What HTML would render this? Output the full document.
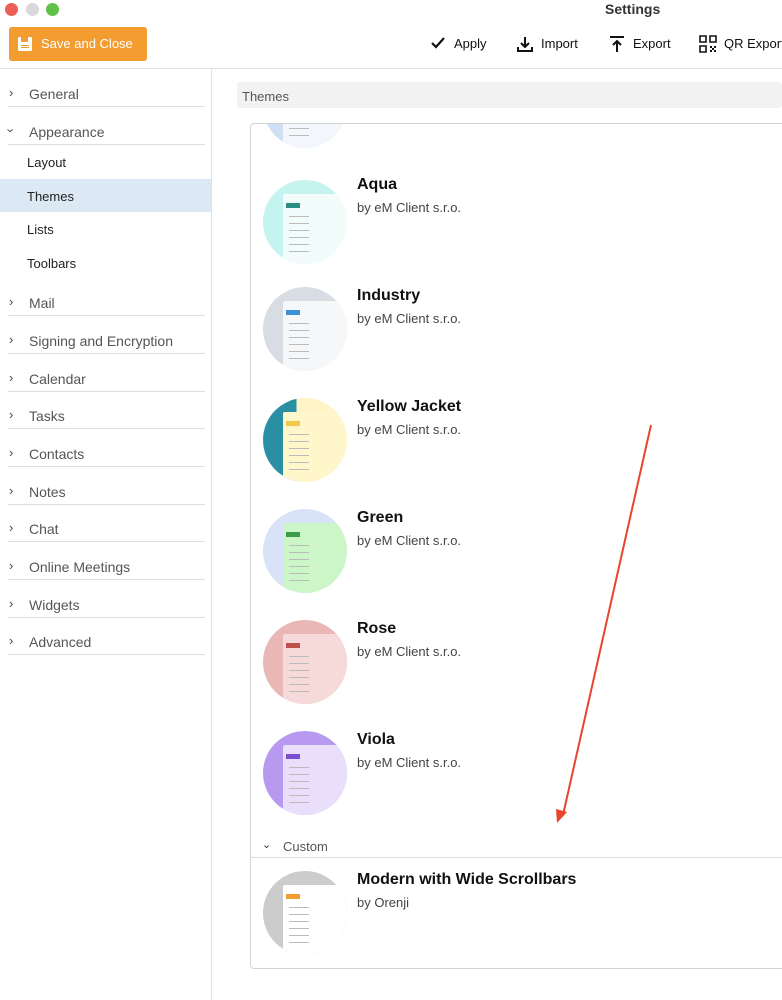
<!DOCTYPE html>
<html><head><style>
*{margin:0;padding:0;box-sizing:border-box}
body{width:782px;height:1000px;overflow:hidden;background:#fff;font-family:"Liberation Sans",sans-serif;position:relative;color:#222}
.a{position:absolute}
.dot{position:absolute;top:3px;width:13px;height:13px;border-radius:50%}
.tb{position:absolute;top:36px;font-size:13px;color:#111;white-space:nowrap}
.hd{position:absolute;left:29px;font-size:14px;color:#555}
.chev{position:absolute;left:9px;font-size:13px;color:#444}
.sep{position:absolute;left:8px;width:197px;height:1px;background:#ddd}
.sub{position:absolute;left:27px;font-size:13px;color:#222}
.circ{position:absolute;left:263px;width:84px;height:84px;border-radius:50%;overflow:hidden}
.circ .s{position:absolute;left:20px;top:14px;width:64px;height:70px;background:rgba(255,255,255,.75);border-radius:2px}
.circ .s:before{content:"";position:absolute;left:3px;top:9px;width:14px;height:5px;background:var(--c)}
.circ .s:after{content:"";position:absolute;left:6px;top:22px;width:20px;height:40px;background:repeating-linear-gradient(#bbb 0 1px,transparent 1px 7px)}
.t{position:absolute;left:357px;font-size:16px;font-weight:bold;color:#111}
.b{position:absolute;left:357px;font-size:13px;color:#444}
</style></head><body>
<div class="dot" style="left:5px;background:#ec5f57"></div>
<div class="dot" style="left:26px;background:#d9d9d9"></div>
<div class="dot" style="left:46px;background:#5fc148"></div>
<div class="a" style="left:605px;top:1px;font-size:14px;font-weight:bold;color:#333">Settings</div>
<div class="a" style="left:9px;top:27px;width:138px;height:34px;background:#f39c2f;border-radius:3px;color:#fff;font-size:13px;line-height:34px;padding-left:32px">Save and Close</div>
<svg class="a" style="left:17px;top:36px" width="16" height="16" viewBox="0 0 16 16"><rect x="1" y="1" width="14" height="14" rx="1.5" fill="#fff"/><rect x="4" y="1" width="7" height="5" fill="#f39c2f"/><rect x="4" y="9" width="8" height="1" fill="#f39c2f"/><rect x="4" y="11" width="8" height="1" fill="#f39c2f"/></svg>
<svg class="a" style="left:430px;top:36px" width="16" height="14"><path d="M2 7l4 4 8-9" stroke="#111" stroke-width="2.2" fill="none"/></svg>
<div class="tb" style="left:454px">Apply</div>
<svg class="a" style="left:516px;top:35px" width="18" height="18"><path d="M9 2v10M5 8l4 4 4-4M2 12v4h14v-4" stroke="#111" stroke-width="2" fill="none"/></svg>
<div class="tb" style="left:541px">Import</div>
<svg class="a" style="left:608px;top:35px" width="18" height="18"><path d="M2 2h14M9 17V6M5 10l4-4 4 4" stroke="#111" stroke-width="2" fill="none"/></svg>
<div class="tb" style="left:633px">Export</div>
<svg class="a" style="left:699px;top:35px" width="18" height="18"><path d="M1 1h6v6H1zM11 1h6v6h-6zM1 11h6v6H1z" stroke="#111" stroke-width="1.6" fill="none"/><path d="M11 11h2v2h-2zM15 11h2v2h-2zM13 13h2v2h-2zM11 15h2v2h-2zM15 15h2v2h-2z" fill="#111"/></svg>
<div class="tb" style="left:724px">QR Export</div>
<div class="a" style="left:0;top:68px;width:782px;height:1px;background:#e3e3e3"></div>
<div class="a" style="left:211px;top:69px;width:1px;height:931px;background:#e3e3e3"></div>

<div class="a" style="left:0;top:179px;width:211px;height:33px;background:#dde8f5"></div>
<div class="chev" style="top:85px">›</div><div class="hd" style="top:86px">General</div><div class="sep" style="top:106px"></div>
<div class="chev" style="top:123px;transform:rotate(90deg)">›</div><div class="hd" style="top:124px">Appearance</div><div class="sep" style="top:144px"></div>
<div class="sub" style="top:155px">Layout</div>
<div class="sub" style="top:189px">Themes</div>
<div class="sub" style="top:222px">Lists</div>
<div class="sub" style="top:256px">Toolbars</div>
<div class="chev" style="top:294px">›</div><div class="hd" style="top:295px">Mail</div><div class="sep" style="top:315px"></div>
<div class="chev" style="top:332px">›</div><div class="hd" style="top:333px">Signing and Encryption</div><div class="sep" style="top:353px"></div>
<div class="chev" style="top:370px">›</div><div class="hd" style="top:371px">Calendar</div><div class="sep" style="top:391px"></div>
<div class="chev" style="top:407px">›</div><div class="hd" style="top:408px">Tasks</div><div class="sep" style="top:428px"></div>
<div class="chev" style="top:445px">›</div><div class="hd" style="top:446px">Contacts</div><div class="sep" style="top:466px"></div>
<div class="chev" style="top:483px">›</div><div class="hd" style="top:484px">Notes</div><div class="sep" style="top:504px"></div>
<div class="chev" style="top:520px">›</div><div class="hd" style="top:521px">Chat</div><div class="sep" style="top:541px"></div>
<div class="chev" style="top:558px">›</div><div class="hd" style="top:559px">Online Meetings</div><div class="sep" style="top:579px"></div>
<div class="chev" style="top:596px">›</div><div class="hd" style="top:597px">Widgets</div><div class="sep" style="top:617px"></div>
<div class="chev" style="top:633px">›</div><div class="hd" style="top:634px">Advanced</div><div class="sep" style="top:654px"></div>

<div class="a" style="left:237px;top:82px;width:545px;height:26px;background:#f2f2f2;border-radius:3px;font-size:13px;color:#555;padding:7px 5px">Themes</div>
<div class="a" style="left:250px;top:123px;width:560px;height:846px;border:1px solid #d4d4d4;border-radius:4px"></div>
<div class="a" style="left:251px;top:124px;width:200px;height:40px;overflow:hidden">
<div class="circ" style="left:12px;top:-60px;background:#cfe0f4;--c:#5b8fd0"><div class="s"></div></div>
</div>

<div class="circ" style="top:180px;background:#c5f3ef;--c:#2a8f80"><div class="s"></div></div>
<div class="t" style="top:176px">Aqua</div><div class="b" style="top:200px">by eM Client s.r.o.</div>
<div class="circ" style="top:287px;background:#d8dde3;--c:#3d8fd6"><div class="s"></div></div>
<div class="t" style="top:287px">Industry</div><div class="b" style="top:311px">by eM Client s.r.o.</div>
<div class="circ" style="top:398px;background:linear-gradient(90deg,#2b8fa3 40%,#fff4c8 40%);--c:#f2c94c"><div class="s" style="background:#fff6cc"></div></div>
<div class="t" style="top:398px">Yellow Jacket</div><div class="b" style="top:422px">by eM Client s.r.o.</div>
<div class="circ" style="top:509px;background:#d9e3f7;--c:#3e9b4a"><div class="s" style="background:#cdf6c8"></div></div>
<div class="t" style="top:509px">Green</div><div class="b" style="top:533px">by eM Client s.r.o.</div>
<div class="circ" style="top:620px;background:#eab7b7;--c:#c0504d"><div class="s" style="background:#f6d9d9"></div></div>
<div class="t" style="top:620px">Rose</div><div class="b" style="top:644px">by eM Client s.r.o.</div>
<div class="circ" style="top:731px;background:#b79af0;--c:#7a4fd0"><div class="s" style="background:#eadffb"></div></div>
<div class="t" style="top:731px">Viola</div><div class="b" style="top:755px">by eM Client s.r.o.</div>

<div class="a" style="left:262px;top:838px;font-size:11px;color:#333">⌄</div>
<div class="a" style="left:283px;top:839px;font-size:13px;color:#555">Custom</div>
<div class="a" style="left:251px;top:857px;width:531px;height:1px;background:#ddd"></div>
<div class="circ" style="top:871px;background:#ccc;--c:#f39c2f"><div class="s" style="background:#fff"></div></div>
<div class="t" style="top:871px">Modern with Wide Scrollbars</div><div class="b" style="top:895px">by Orenji</div>

<svg class="a" style="left:0;top:0" width="782" height="1000"><path d="M651 425L563 815" stroke="#e8452c" stroke-width="2"/><path d="M557 823l-1-14 11 3z" fill="#e8452c"/></svg>
</body></html>
